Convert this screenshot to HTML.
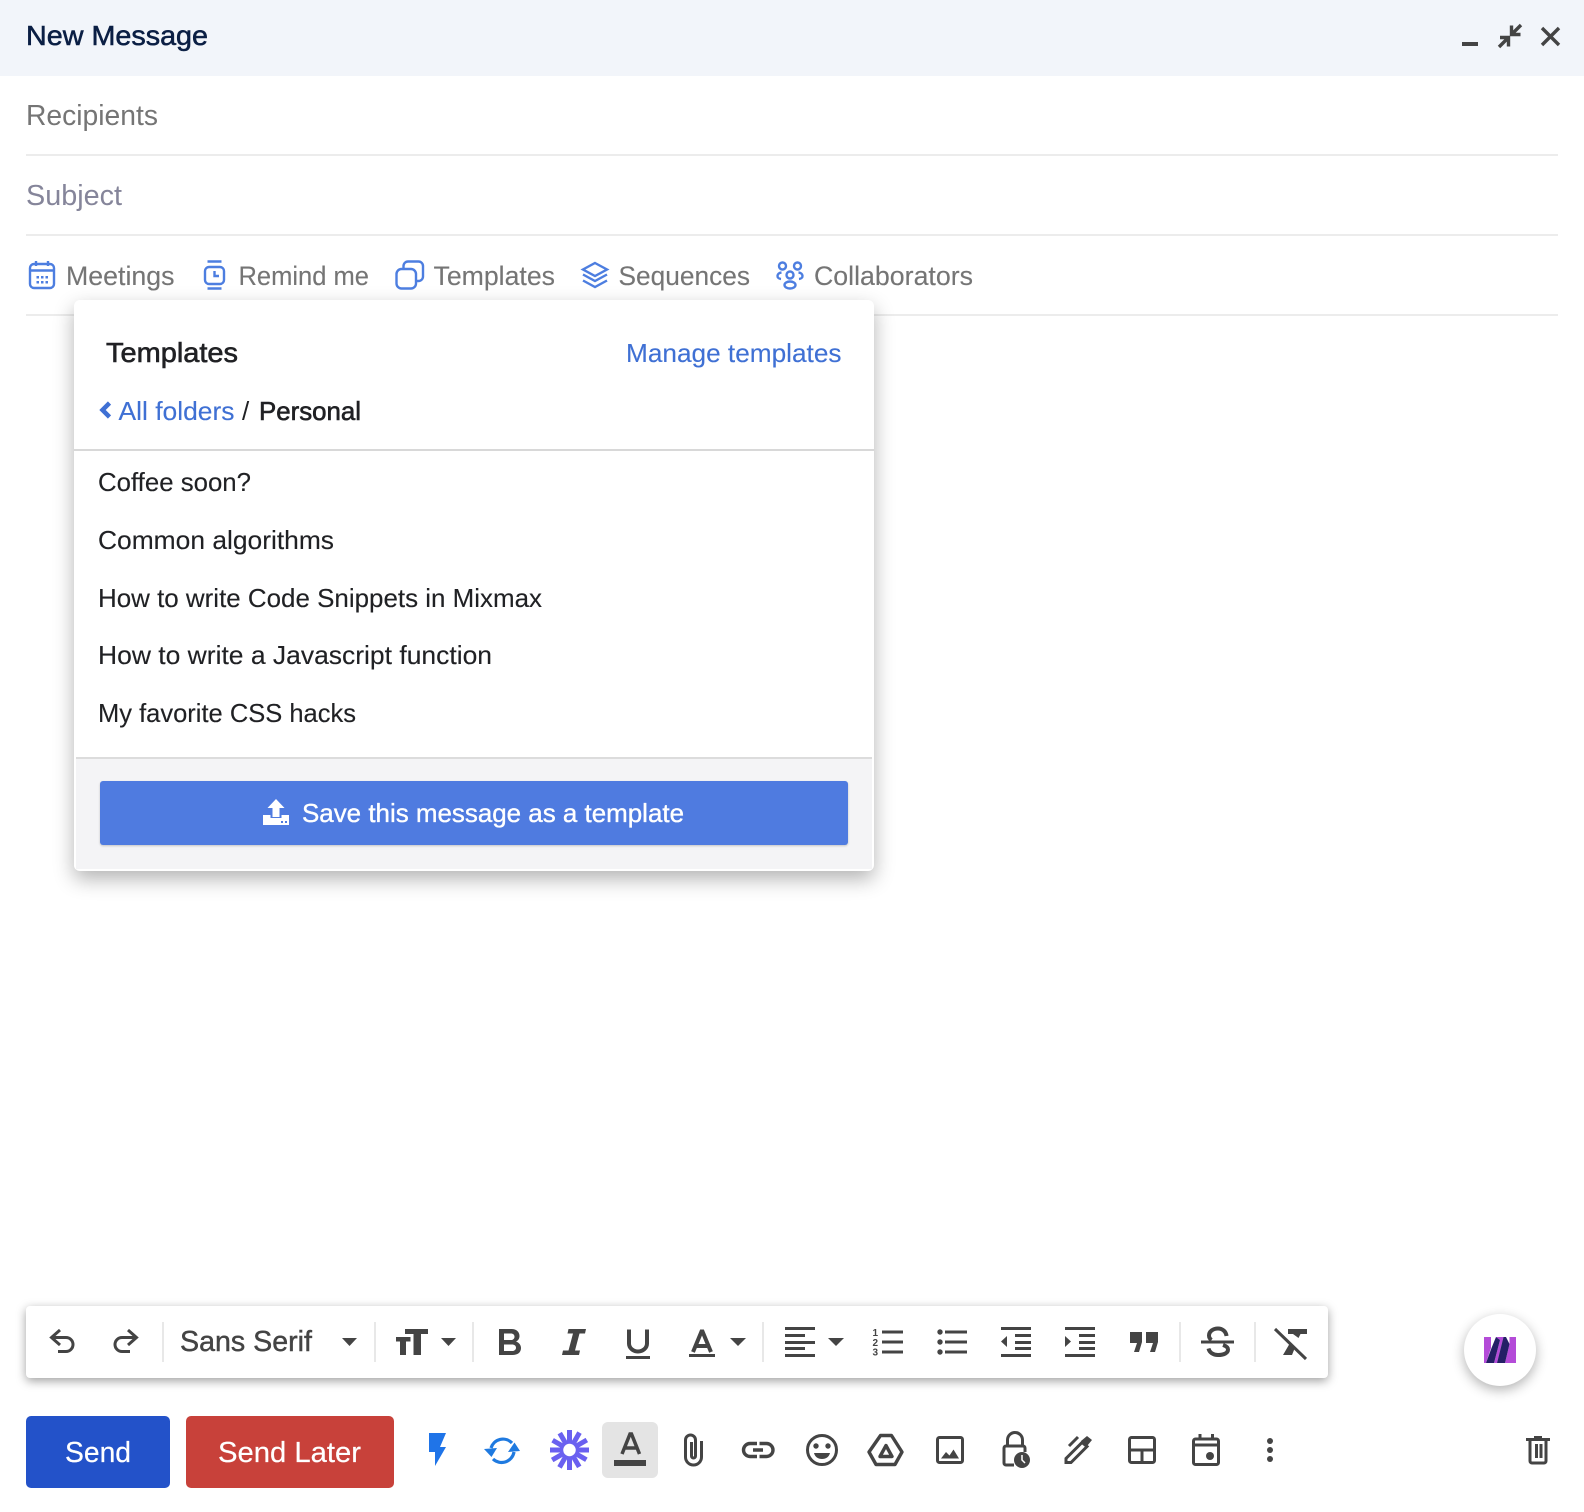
<!DOCTYPE html>
<html><head><meta charset="utf-8"><style>
html,body{margin:0;padding:0;background:#fff;width:1584px;height:1512px;overflow:hidden}
.a{position:absolute;box-sizing:border-box}
svg{position:absolute;left:0;top:0}
text{font-family:"Liberation Sans",sans-serif}
.t{fill:#757575;font-size:27px;stroke:#757575;stroke-width:.12}
.l{fill:#202124;font-size:26px;stroke:#202124;stroke-width:.12}
.i{fill:none;stroke:#444;stroke-width:3}
.f{fill:#444}
.b{fill:none;stroke:#4d7ee0;stroke-width:2.4}
</style></head><body>
<div class="a" style="left:0;top:0;width:1584px;height:76px;background:#f2f5fa"></div>
<div class="a" style="left:26px;top:154px;width:1532px;height:2px;background:#ececec"></div>
<div class="a" style="left:26px;top:234px;width:1532px;height:2px;background:#ececec"></div>
<div class="a" style="left:26px;top:314px;width:1532px;height:2px;background:#ececec"></div>
<div class="a" style="left:74px;top:300px;width:800px;height:571px;background:#fff;border-radius:6px;box-shadow:0 8px 20px rgba(0,0,0,.3);overflow:hidden">
  <div class="a" style="left:0;top:149px;width:800px;height:2px;background:#d8d8d8"></div>
  <div class="a" style="left:2px;top:457px;width:796px;height:112px;background:#f4f4f6;border-top:2px solid #dcdcdc"></div>
  <div class="a" style="left:0;top:459px;width:2px;height:112px;background:#fff"></div>
  <div class="a" style="left:26px;top:481px;width:748px;height:64px;background:#4f7be0;border-radius:3px;box-shadow:0 1px 2px rgba(0,0,0,.2)"></div>
</div>
<div class="a" style="left:26px;top:1306px;width:1302px;height:72px;background:#fff;border-radius:4px;box-shadow:0 3px 10px rgba(0,0,0,.38)"></div>
<div class="a" style="left:1464px;top:1314px;width:72px;height:72px;background:#fff;border-radius:50%;box-shadow:0 4px 12px rgba(0,0,0,.3)"></div>
<div class="a" style="left:26px;top:1416px;width:144px;height:72px;background:#2352c9;border-radius:5px"></div>
<div class="a" style="left:186px;top:1416px;width:208px;height:72px;background:#c8413a;border-radius:5px"></div>
<div class="a" style="left:602px;top:1422px;width:56px;height:56px;background:#e4e4e4;border-radius:6px"></div>

<svg width="1584" height="1512" viewBox="0 0 1584 1512">
<text x="26" y="45" font-size="28" fill="#0b1f44" stroke="#0b1f44" stroke-width=".55" textLength="182" lengthAdjust="spacingAndGlyphs">New Message</text>
<path d="M1462 44h16" stroke="#444" stroke-width="4" fill="none"/>
<path d="M1499 47l8-8M1500 37.500h8.500v9M1521 25l-8 8M1511.500 25.500v9h9" stroke="#444" stroke-width="3.400" fill="none"/>
<path d="M1542 28l17 17M1559 28l-17 17" stroke="#444" stroke-width="3.400" fill="none"/>
<text x="26" y="125" font-size="29" fill="#757575" textLength="132" lengthAdjust="spacingAndGlyphs">Recipients</text>
<text x="26" y="205" font-size="29" fill="#85859a" textLength="96" lengthAdjust="spacingAndGlyphs">Subject</text>
<text class="t" x="66" y="285" textLength="108.500" lengthAdjust="spacingAndGlyphs">Meetings</text>
<text class="t" x="238.500" y="285" textLength="130.500" lengthAdjust="spacingAndGlyphs">Remind me</text>
<text class="t" x="433.500" y="285" textLength="121.500" lengthAdjust="spacingAndGlyphs">Templates</text>
<text class="t" x="618.500" y="285" textLength="131.500" lengthAdjust="spacingAndGlyphs">Sequences</text>
<text class="t" x="814" y="285" textLength="159" lengthAdjust="spacingAndGlyphs">Collaborators</text>

<rect class="b" x="30" y="264" width="24" height="24" rx="4"/><path class="b" d="M30 270.500h24M36 261v5M48 261v5"/>
<path d="M36.500 276h2.500v2.500h-2.500zM41 276h2.500v2.500h-2.500zM45.500 276h2.500v2.500h-2.500zM36.500 281h2.500v2.500h-2.500zM41 281h2.500v2.500h-2.500zM45.500 281h2.500v2.500h-2.500z" fill="#4d7ee0"/>
<rect class="b" x="205" y="267" width="19" height="17" rx="4"/><path class="b" d="M207.500 261.500h14M207.500 288.500h14M214.500 271v5h4.500"/>
<rect class="b" x="396.500" y="269" width="19.500" height="19.500" rx="5"/><path class="b" d="M403.500 268.500v-2.500a4.500 4.500 0 0 1 4.500-4.500h10.500a4.500 4.500 0 0 1 4.500 4.500v10.500a4.500 4.500 0 0 1-4.500 4.500h-2"/>
<path class="b" d="M595 263l12 6.500-12 6.500-12-6.500zM583 274.500l12 6.500 12-6.500M583 280.500l12 6.500 12-6.500"/>
<circle class="b" cx="782.500" cy="266" r="3.500"/><circle class="b" cx="797.500" cy="266" r="3.500"/><circle class="b" cx="790" cy="275" r="3.500"/><ellipse class="b" cx="790" cy="285" rx="5.500" ry="3.500"/><path class="b" d="M781.500 272.500c-5 .5-5.500 6-.5 6.500M798.500 272.500c5 .5 5.500 6 .5 6.500"/>

<text x="106" y="362" font-size="28" fill="#202124" stroke="#202124" stroke-width=".6" textLength="132" lengthAdjust="spacingAndGlyphs">Templates</text>
<text x="626" y="362" font-size="26" fill="#3f70d4" stroke="#3f70d4" stroke-width=".12" textLength="215.500" lengthAdjust="spacingAndGlyphs">Manage templates</text>
<path d="M109.500 403l-7 7 7 7" fill="none" stroke="#3f70d4" stroke-width="4.500"/>
<text x="118.500" y="420" font-size="26" fill="#3f70d4" stroke="#3f70d4" stroke-width=".12" textLength="116" lengthAdjust="spacingAndGlyphs">All folders</text>
<text x="242" y="420" font-size="26" fill="#202124">/</text>
<text x="259" y="420" font-size="26" fill="#202124" stroke="#202124" stroke-width=".6" textLength="102" lengthAdjust="spacingAndGlyphs">Personal</text>
<text class="l" x="98" y="491" textLength="153" lengthAdjust="spacingAndGlyphs">Coffee soon?</text>
<text class="l" x="98" y="549" textLength="236" lengthAdjust="spacingAndGlyphs">Common algorithms</text>
<text class="l" x="98" y="607" textLength="444" lengthAdjust="spacingAndGlyphs">How to write Code Snippets in Mixmax</text>
<text class="l" x="98" y="664" textLength="394" lengthAdjust="spacingAndGlyphs">How to write a Javascript function</text>
<text class="l" x="98" y="722" textLength="258" lengthAdjust="spacingAndGlyphs">My favorite CSS hacks</text>

<path d="M276 799l8.500 9h-5v9h-7v-9h-5zM263 815h7.500v3h11v-3h7.500v10h-26z" fill="#fff"/>
<path d="M281 821h2v2h-2zM285 821h2v2h-2z" fill="#4f7be0"/>
<text x="302" y="822" font-size="26" fill="#fff" stroke="#fff" stroke-width=".35" textLength="382" lengthAdjust="spacingAndGlyphs">Save this message as a template</text>

<!-- toolbar -->
<g fill="#e8e8e8"><rect x="162" y="1322" width="2" height="40"/><rect x="374" y="1322" width="2" height="40"/><rect x="472" y="1322" width="2" height="40"/><rect x="762" y="1322" width="2" height="40"/><rect x="1179" y="1322" width="2" height="40"/><rect x="1254" y="1322" width="2" height="40"/></g>
<path class="i" d="M60 1330l-8.500 7.500 8.500 7.500M52 1337.500h14a7 7 0 0 1 0 14h-8"/>
<path class="i" d="M128 1330l8.500 7.500-8.500 7.500M136 1337.500h-14a7 7 0 0 0 0 14h8"/>
<text x="180" y="1351" font-size="29" fill="#444" stroke="#444" stroke-width=".45" textLength="132" lengthAdjust="spacingAndGlyphs">Sans Serif</text>
<g class="f"><path d="M342 1338h15l-7.500 8zM441 1338h15l-7.500 8zM730 1338h16l-8 8zM828 1338h16l-8 8z"/>
<path d="M396 1337h14.500v4.500h-4.500v13.500h-6v-13.500h-4zM405 1329h23v5h-7v21h-7.500v-21h-8.500z"/>
<path fill-rule="evenodd" d="M499 1329h12.500c5 0 8 3 8 7 0 2.500-1.300 4.500-3.500 5.500 3 1 5 3.500 5 6.500 0 4.500-3.500 7-8.500 7h-13.500zM504 1333.500v6.500h7c2 0 3.500-1.300 3.500-3.300s-1.500-3.200-3.500-3.200zM504 1344.500v6.500h8c2.300 0 4-1.300 4-3.300s-1.700-3.200-4-3.200z"/>
<path d="M568.500 1329h17.500l-1 4.500h-5.500l-4.500 17h5l-1 4.500h-17l1-4.500h5.500l4.500-17h-5.500z"/>
<path d="M626 1356h24v3h-24zM689 1354h26v3h-26z"/>
<path d="M785 1327h30v3h-30zM785 1334h20v3h-20zM785 1341h30v3h-30zM785 1347h20v3h-20zM785 1354h30v3h-30z"/>
<path d="M882 1330.500h21v3h-21zM882 1340.500h21v3h-21zM882 1350.500h21v3h-21z"/>
<path d="M945 1330.500h22v3h-22zM945 1340.500h22v3h-22zM945 1350.500h22v3h-22z"/>
<circle cx="940" cy="1332" r="2.700"/><circle cx="940" cy="1342" r="2.700"/><circle cx="940" cy="1352" r="2.700"/>
<path d="M1001 1327h30v3h-30zM1015 1334h16v3h-16zM1015 1341h16v3h-16zM1015 1347h16v3h-16zM1001 1354h30v3h-30zM1007 1336v11l-6-5.500z"/>
<path d="M1065 1327h30v3h-30zM1079 1334h16v3h-16zM1079 1341h16v3h-16zM1079 1347h16v3h-16zM1065 1354h30v3h-30zM1065 1336v11l6-5.500z"/>
<path d="M1130 1332h12v10l-3 10h-5l3-9h-7zM1146 1332h12v10l-3 10h-5l3-9h-7z"/>
</g>
<path class="i" style="stroke-width:4" d="M629 1329.500v14a9 8 0 0 0 18 0v-14"/>
<path class="i" style="stroke-width:4" d="M693 1352l8.500-20.500h1l8.500 20.500M696 1346h11"/>
<text x="872.500" y="1336" font-size="10" font-weight="bold" fill="#444">1</text><text x="872.500" y="1346" font-size="10" font-weight="bold" fill="#444">2</text><text x="872.500" y="1355.500" font-size="10" font-weight="bold" fill="#444">3</text>
<path class="i" d="M1201 1342h33"/>
<path class="i" style="stroke-width:4" d="M1226.500 1336c-.5-4.500-4-7.500-8.500-7.500-5 0-9 3-9 7 0 2 1 3.500 2.500 4.500M1223 1345c3 1 5 2.500 5 4.500 0 3.500-4 5.500-10 5.500-5 0-8.500-2.500-9.500-6.500"/>
<path class="f" d="M1288 1329h19v5h-6.500l-2 4-5.500-4h-5zM1290 1343l5 4.500-3 7.500h-9z"/>
<path d="M1275 1329l31 30" stroke="#444" stroke-width="3" fill="none"/>
<!-- logo -->
<path d="M1484 1337h7v11l-5 15h-2zM1496 1337h7.500l-6.500 26h-3l6-23zM1509.500 1337h6.500v26h-11l4.500-19z" fill="#b44bd8"/>
<path d="M1486 1363h8l6-23-4-3-4.500 11zM1497 1363h8l4.500-19-3.500-7h-2.500z" fill="#241f66"/>

<!-- bottom -->
<text x="65" y="1462" font-size="29" fill="#fff" stroke="#fff" stroke-width=".2" textLength="66" lengthAdjust="spacingAndGlyphs">Send</text>
<text x="218" y="1462" font-size="29" fill="#fff" stroke="#fff" stroke-width=".2" textLength="143" lengthAdjust="spacingAndGlyphs">Send Later</text>
<path d="M429 1433h17l-6 14h6l-11 19v-14h-6z" fill="#1f74e8"/>
<path d="M491 1448a12.500 12.500 0 0 1 21-5M514 1452a12.500 12.500 0 0 1-21 7" fill="none" stroke="#1f7ae0" stroke-width="3.200"/>
<path d="M484 1449l13-1-5.500 9zM508 1452l12-1-5.500-8.500z" fill="#1f7ae0"/>
<circle cx="569.500" cy="1450" r="8" fill="none" stroke="#6a60f0" stroke-width="3.500"/>
<g stroke="#6a60f0" stroke-width="5" fill="none"><path d="M569.500 1430v12M569.500 1458v12M550 1450h12M577 1450h12"/><path d="M569.500 1430v12M569.500 1458v12M550 1450h12M577 1450h12" transform="rotate(30 569.500 1450)"/><path d="M569.500 1430v12M569.500 1458v12M550 1450h12M577 1450h12" transform="rotate(60 569.500 1450)"/></g>
<path class="i" style="stroke-width:3.500" d="M622 1454l8-20h1.500l8 20M625 1448h11"/>
<rect x="614" y="1460" width="32" height="6" fill="#444"/>
<path class="i" d="M701.500 1441v16a8 8 0 0 1-16 0v-17a5 5 0 0 1 10 0v16a2 2 0 0 1-4 0v-14"/>
<path class="i" style="stroke-width:3.400" d="M757 1443.500h-7a6.500 6.500 0 0 0 0 13h7M759.500 1443.500h7a6.500 6.500 0 0 1 0 13h-7M753 1450h10"/>
<circle class="i" cx="822" cy="1450" r="14.500"/><circle class="f" cx="816" cy="1446" r="2.700"/><circle class="f" cx="828" cy="1446" r="2.700"/><path class="f" d="M814 1453h16c-1 4-4 6-8 6s-7-2-8-6z"/>
<path class="i" style="stroke-width:3.400" stroke-linejoin="round" d="M880.500 1435.500h11l10.500 16.500-7 12.500h-19l-7-12.500zM886 1445.500l6 11h-12z"/>
<rect class="i" x="937.500" y="1437.500" width="25" height="25" rx="2"/><path class="f" d="M941 1458.500l5-6.500 3.500 3.500 4-6 5.500 9z"/>
<path class="i" d="M1007.500 1445v-5a7.500 7.500 0 0 1 15 0v5M1014 1465h-8a2 2 0 0 1-2-2v-15a2 2 0 0 1 2-2h17a2 2 0 0 1 2 2v4"/>
<circle class="f" cx="1022" cy="1460" r="8"/><path d="M1022 1455v5l3 3" stroke="#fff" stroke-width="1.500" fill="none"/>
<path class="i" d="M1066 1462.500v-4l16-16 5 4-16 16zM1069 1446l9-9"/><path class="f" d="M1081 1441l6-5 5 4-5 6z"/>
<rect class="i" x="1129.500" y="1437.500" width="25" height="25" rx="2"/><path class="i" d="M1129.500 1450h25M1142 1450v12.500"/>
<rect class="i" x="1193.500" y="1439" width="25" height="25.500" rx="2"/><path class="i" d="M1193.500 1445h25M1200 1434v6M1212.500 1434v6"/><circle class="f" cx="1210" cy="1456" r="4"/>
<circle class="f" cx="1270" cy="1441" r="3"/><circle class="f" cx="1270" cy="1450" r="3"/><circle class="f" cx="1270" cy="1459" r="3"/>
<path class="i" d="M1526 1439.500h24M1530 1440v21a2 2 0 0 0 2 2h12a2 2 0 0 0 2-2v-21"/><path class="f" d="M1534 1436h8v3h-8zM1535 1444h3v14h-3zM1539.500 1444h3v14h-3z"/>
</svg>
</body></html>
